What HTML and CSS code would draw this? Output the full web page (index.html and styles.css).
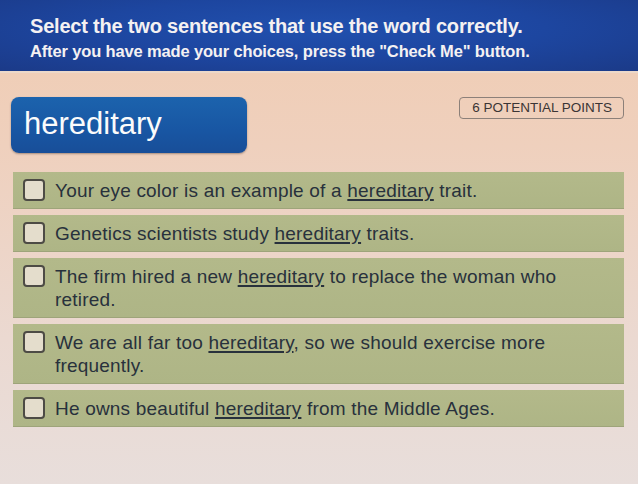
FILE: index.html
```html
<!DOCTYPE html>
<html>
<head>
<meta charset="utf-8">
<link rel="stylesheet" href="styles.css">
</head>
<body>
<header class="banner">
  <div class="title">Select the two sentences that use the word correctly.</div>
  <div class="subtitle">After you have made your choices, press the "Check Me" button.</div>
</header>
<main class="content">
  <div class="top">
    <div class="word">hereditary</div>
    <div class="points">6 POTENTIAL POINTS</div>
  </div>
  <div class="options">
    <label class="option"><span class="box"></span><span class="text">Your eye color is an example of a <u>hereditary</u> trait.</span></label>
    <label class="option"><span class="box"></span><span class="text">Genetics scientists study <u>hereditary</u> traits.</span></label>
    <label class="option"><span class="box"></span><span class="text">The firm hired a new <u>hereditary</u> to replace the woman who retired.</span></label>
    <label class="option"><span class="box"></span><span class="text">We are all far too <u>hereditary</u>, so we should exercise more frequently.</span></label>
    <label class="option"><span class="box"></span><span class="text">He owns beautiful <u>hereditary</u> from the Middle Ages.</span></label>
  </div>
</main>
</body>
</html>
```
FILE: styles.css
```css
html, body { margin: 0; padding: 0; }
body {
  width: 638px;
  height: 484px;
  overflow: hidden;
  font-family: "Liberation Sans", Arial, sans-serif;
  background: linear-gradient(180deg, #f0ccb2 0%, #efd0bd 30%, #ebd9d1 70%, #e8dedb 100%);
}
.banner {
  height: 73px;
  box-sizing: border-box;
  padding: 14px 0 0 30px;
  background: radial-gradient(ellipse at 50% 40%, #2150ae 0%, #1d46a0 50%, #1b3a88 100%);
  border-bottom: 2px solid #ecd8c9;
  color: #f4f1f2;
}
.title {
  font-weight: bold;
  font-size: 20px;
  line-height: 24px;
  letter-spacing: -0.2px;
}
.subtitle {
  font-weight: bold;
  font-size: 16.5px;
  line-height: 22px;
  letter-spacing: -0.15px;
  margin-top: 2px;
}
.content {
  padding: 24px 14px 0 11px;
}
.top {
  display: flex;
  justify-content: space-between;
  align-items: flex-start;
}
.word {
  width: 236px;
  height: 56px;
  box-sizing: border-box;
  border-radius: 8px;
  background: linear-gradient(180deg, #1c63ad 0%, #1856a3 60%, #184e98 100%);
  color: #fbfbfb;
  font-size: 31px;
  line-height: 36px;
  padding: 9px 0 0 13px;
  box-shadow: 0 1px 2px rgba(60,40,30,0.4);
}
.points {
  border: 1px solid #8c8079;
  border-radius: 4px;
  height: 22px;
  box-sizing: border-box;
  padding: 0 11px 0 12px;
  font-size: 13.5px;
  line-height: 20px;
  color: #3b3535;
}
.options {
  margin-top: 19px;
  display: flex;
  flex-direction: column;
  gap: 6px;
  margin-left: 2px;
}
.option {
  display: flex;
  align-items: flex-start;
  background: linear-gradient(180deg, #b3b98a 0%, #aeb586 100%);
  padding: 7px 30px 6px 10px;
  border-bottom: 1px solid #9ea47a;
}
.box {
  flex: none;
  width: 22px;
  height: 22px;
  box-sizing: border-box;
  border: 2px solid #4d4b45;
  border-radius: 4px;
  background: #e4ddcc;
  margin-right: 10px;
}
.text {
  font-size: 19px;
  line-height: 23px;
  letter-spacing: 0.2px;
  color: #28313c;
}
.text u {
  text-decoration-thickness: 1.5px;
  text-underline-offset: 2px;
}
```
